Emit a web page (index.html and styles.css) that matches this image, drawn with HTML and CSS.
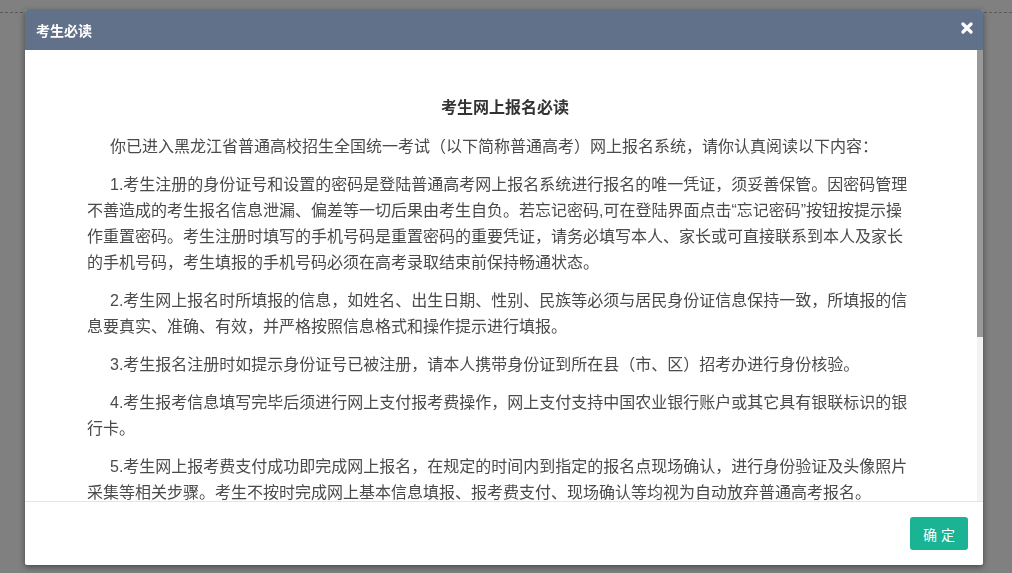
FILE: index.html
```html
<!DOCTYPE html>
<html lang="zh-CN">
<head>
  <meta charset="UTF-8">
  <meta name="viewport" content="width=device-width, initial-scale=1.0">
  <title>考生必读</title>
  <link rel="stylesheet" href="styles.css">
</head>
<body>
  <!-- page behind the overlay -->
  <div class="page"></div>

  <!-- Notice dialog -->
  <div class="modal">
    <div class="modal-header">
      <span class="modal-title">考生必读</span>
      <button class="modal-close" aria-label="关闭">
        <svg width="12" height="12" viewBox="0 0 12 12">
          <path d="M2 2 L10 10 M10 2 L2 10" stroke="#fff" stroke-width="3.2" stroke-linecap="round" fill="none"/>
        </svg>
      </button>
    </div>

    <div class="modal-body">
      <h3 class="notice-title">考生网上报名必读</h3>
      <p>你已进入黑龙江省普通高校招生全国统一考试（以下简称普通高考）网上报名系统，请你认真阅读以下内容：</p>
      <p>1.考生注册的身份证号和设置的密码是登陆普通高考网上报名系统进行报名的唯一凭证，须妥善保管。因密码管理不善造成的考生报名信息泄漏、偏差等一切后果由考生自负。若忘记密码,可在登陆界面点击“忘记密码”按钮按提示操作重置密码。考生注册时填写的手机号码是重置密码的重要凭证，请务必填写本人、家长或可直接联系到本人及家长的手机号码，考生填报的手机号码必须在高考录取结束前保持畅通状态。</p>
      <p>2.考生网上报名时所填报的信息，如姓名、出生日期、性别、民族等必须与居民身份证信息保持一致，所填报的信息要真实、准确、有效，并严格按照信息格式和操作提示进行填报。</p>
      <p>3.考生报名注册时如提示身份证号已被注册，请本人携带身份证到所在县（市、区）招考办进行身份核验。</p>
      <p>4.考生报考信息填写完毕后须进行网上支付报考费操作，网上支付支持中国农业银行账户或其它具有银联标识的银行卡。</p>
      <p>5.考生网上报考费支付成功即完成网上报名，在规定的时间内到指定的报名点现场确认，进行身份验证及头像照片采集等相关步骤。考生不按时完成网上基本信息填报、报考费支付、现场确认等均视为自动放弃普通高考报名。</p>
    </div>

    <div class="modal-footer">
      <button class="btn-confirm">确 定</button>
    </div>
  </div>
</body>
</html>
```

FILE: styles.css
```css
/* Base */
html, body {
  margin: 0;
  height: 100%;
}

body {
  font-family: "Liberation Sans", "Noto Sans CJK SC", sans-serif;
  background: #808080;
  overflow: hidden;
}

/* Page under the mask */
.page {
  margin-top: 12px;
  border-top: 1px dashed #5a5a5a;
}

/* Dialog */
.modal {
  position: fixed;
  top: 10px;
  left: 25px;
  width: 958px;
  background: #fff;
  border-radius: 2px;
  box-shadow: 0 2px 6px rgba(0, 0, 0, 0.45);
  overflow: hidden;
}

.modal-header {
  height: 40px;
  background: #62718a;
  display: flex;
  align-items: center;
  justify-content: space-between;
  padding: 0 10px 0 11px;
}

.modal-title {
  color: #fff;
  font-size: 14px;
  font-weight: bold;
}

.modal-close {
  border: 0;
  background: none;
  padding: 0;
  width: 12px;
  height: 12px;
  display: flex;
  cursor: pointer;
  margin-top: -4px;
}

/* Scrolling content (slim scroll bar drawn as background) */
.modal-body {
  height: 451px;
  overflow-y: auto;
  scrollbar-width: none;
  box-sizing: border-box;
  padding: 45px 72px 240px 62px;
  color: #4a4a4a;
  font-size: 16px;
  background:
    linear-gradient(#999, #999) right top / 6px 287px no-repeat,
    linear-gradient(#f3f3f3, #f3f3f3) right top / 6px 100% no-repeat,
    #fff;
}

.notice-title {
  margin: 0 0 13px;
  padding-left: 12px;
  text-align: center;
  font-size: 16px;
  line-height: 26px;
  color: #333;
}

.modal-body p {
  margin: 0 0 12px;
  line-height: 26px;
  text-indent: 23px;
}

/* Footer */
.modal-footer {
  border-top: 1px solid #e5e5e5;
  padding: 15px;
  display: flex;
  justify-content: flex-end;
}

.btn-confirm {
  background: #1ab394;
  border: 0;
  border-radius: 3px;
  color: #fff;
  font-family: inherit;
  font-size: 14px;
  height: 33px;
  padding: 0 13px;
  cursor: pointer;
}
```
